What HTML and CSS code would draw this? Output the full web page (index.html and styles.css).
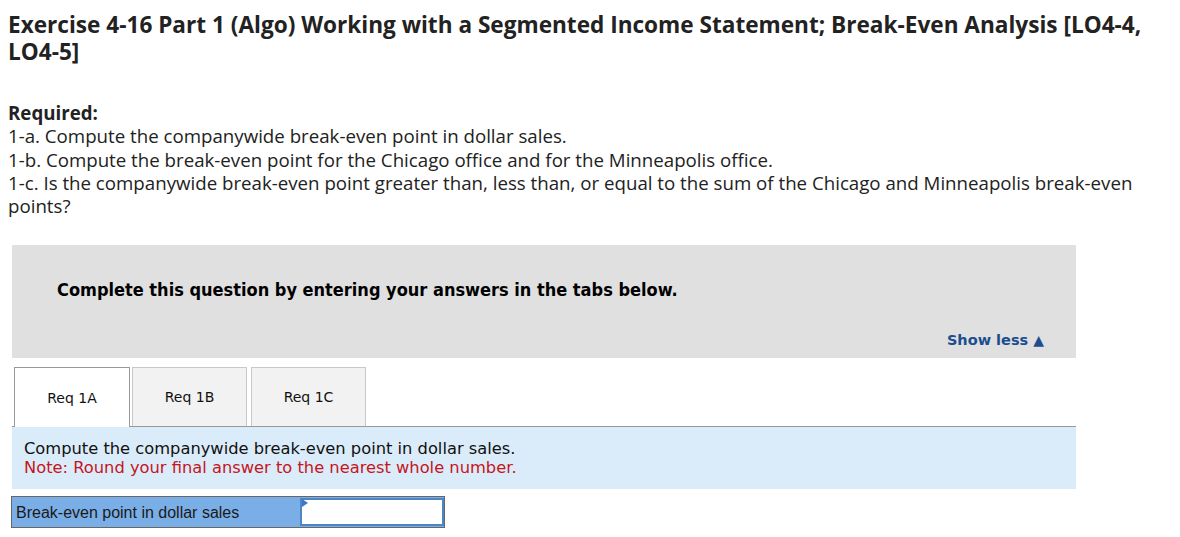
FILE: index.html
```html
<!DOCTYPE html>
<html lang="en">
<head>
    <meta charset="UTF-8">
    <meta name="viewport" content="width=device-width, initial-scale=1.0">
    <title>Exercise 4-16 Part 1</title>
    <link rel="stylesheet" href="styles.css">
</head>
<body>

    <h1 class="exercise-title">Exercise 4-16 Part 1 (Algo) Working with a Segmented Income Statement; Break-Even Analysis [LO4-4, LO4-5]</h1>

    <div class="required">
        <b>Required:</b>
        <p>1-a. Compute the companywide break-even point in dollar sales.</p>
        <p>1-b. Compute the break-even point for the Chicago office and for the Minneapolis office.</p>
        <p>1-c. Is the companywide break-even point greater than, less than, or equal to the sum of the Chicago and Minneapolis break-even points?</p>
    </div>

    <div class="question-box">
        <div class="instructions">Complete this question by entering your answers in the tabs below.</div>
        <div class="show-less">Show less <span class="arrow">&#9650;</span></div>
    </div>

    <div class="tab-row">
        <div class="tab active">Req 1A</div>
        <div class="tab">Req 1B</div>
        <div class="tab">Req 1C</div>
    </div>

    <div class="tab-panel">
        <div>Compute the companywide break-even point in dollar sales.</div>
        <div class="note">Note: Round your final answer to the nearest whole number.</div>
    </div>

    <table class="answer-table">
        <tr>
            <td class="answer-label">Break-even point in dollar sales</td>
            <td class="answer-cell">
                <span class="cell-marker"></span>
                <input type="text" class="answer-input" value="">
            </td>
        </tr>
    </table>

</body>
</html>
```

FILE: styles.css
```css
body {
    margin: 8px;
    background: #ffffff;
    color: #222;
    font-family: "Open Sans", "Liberation Sans", Arial, sans-serif;
}

.exercise-title {
    margin: 0;
    padding-top: 3px;
    max-width: 1150px;
    font-size: 22.6px;
    line-height: 27px;
    font-weight: 700;
    color: #222;
}

.required {
    margin-top: 36px;
    font-size: 18.7px;
    line-height: 23.3px;
}

.required p {
    margin: 0;
}

/* grey instructions strip */
.question-box {
    margin: 28px 96px 0 4px;
    height: 113px;
    box-sizing: border-box;
    padding: 34px 32px 0 45px;
    background: #e0e0e0;
    display: flex;
    flex-direction: column;
}

.instructions {
    font-family: "DejaVu Sans Condensed", "DejaVu Sans", sans-serif;
    font-weight: bold;
    font-size: 18px;
    line-height: 22px;
    color: #000;
}

.show-less {
    margin-top: 31px;
    align-self: flex-end;
    font-family: "DejaVu Sans", sans-serif;
    font-weight: bold;
    font-size: 14.5px;
    color: #1c4e8f;
}

.show-less .arrow {
    font-size: 14px;
}

/* tabs */
.tab-row {
    display: flex;
    gap: 2px;
    margin: 9px 96px 0 4px;
    padding-left: 2px;
    border-bottom: 1px solid #999;
}

.tab {
    width: 113px;
    height: 58px;
    display: flex;
    align-items: center;
    justify-content: center;
    background: #f2f2f2;
    border: 1px solid #c8c8c8;
    border-bottom: none;
    font-family: "DejaVu Sans", sans-serif;
    font-size: 14px;
    color: #111;
}

.tab + .tab + .tab {
    margin-left: 2px;
}

.tab.active {
    width: 114px;
    background: #fff;
    border-color: #999;
    height: 59px;
    margin-bottom: -1px;
}

.tab-panel {
    margin: 0 96px 0 4px;
    height: 62px;
    box-sizing: border-box;
    padding: 12px 12px 0;
    background: #daecf9;
    font-family: "DejaVu Sans", sans-serif;
    font-size: 16.3px;
    line-height: 19px;
    color: #111;
}

.tab-panel .note {
    color: #c5161d;
}

/* answer row */
.answer-table {
    margin: 7px 0 0 3px;
    border-collapse: collapse;
    border: 1px solid #666;
    font-family: "Liberation Sans", Arial, sans-serif;
    font-size: 16px;
}

.answer-table td {
    padding: 0;
    height: 28px;
}

.answer-label {
    width: 284px;
    padding-left: 4px !important;
    padding-top: 2px !important;
    background: #7aaee6;
    color: #1a1a1a;
}

.answer-cell {
    position: relative;
    width: 144px;
    background: #7aaee6;
}

.answer-input {
    display: block;
    width: 144px;
    height: 28px;
    box-sizing: border-box;
    margin: 0;
    border: 2px solid #4d86c6;
    background: #fff;
}

.cell-marker {
    position: absolute;
    top: 2px;
    left: 2px;
    width: 0;
    height: 0;
    border-top: 4px solid transparent;
    border-bottom: 4px solid transparent;
    border-left: 6px solid #3a79c6;
}
```
